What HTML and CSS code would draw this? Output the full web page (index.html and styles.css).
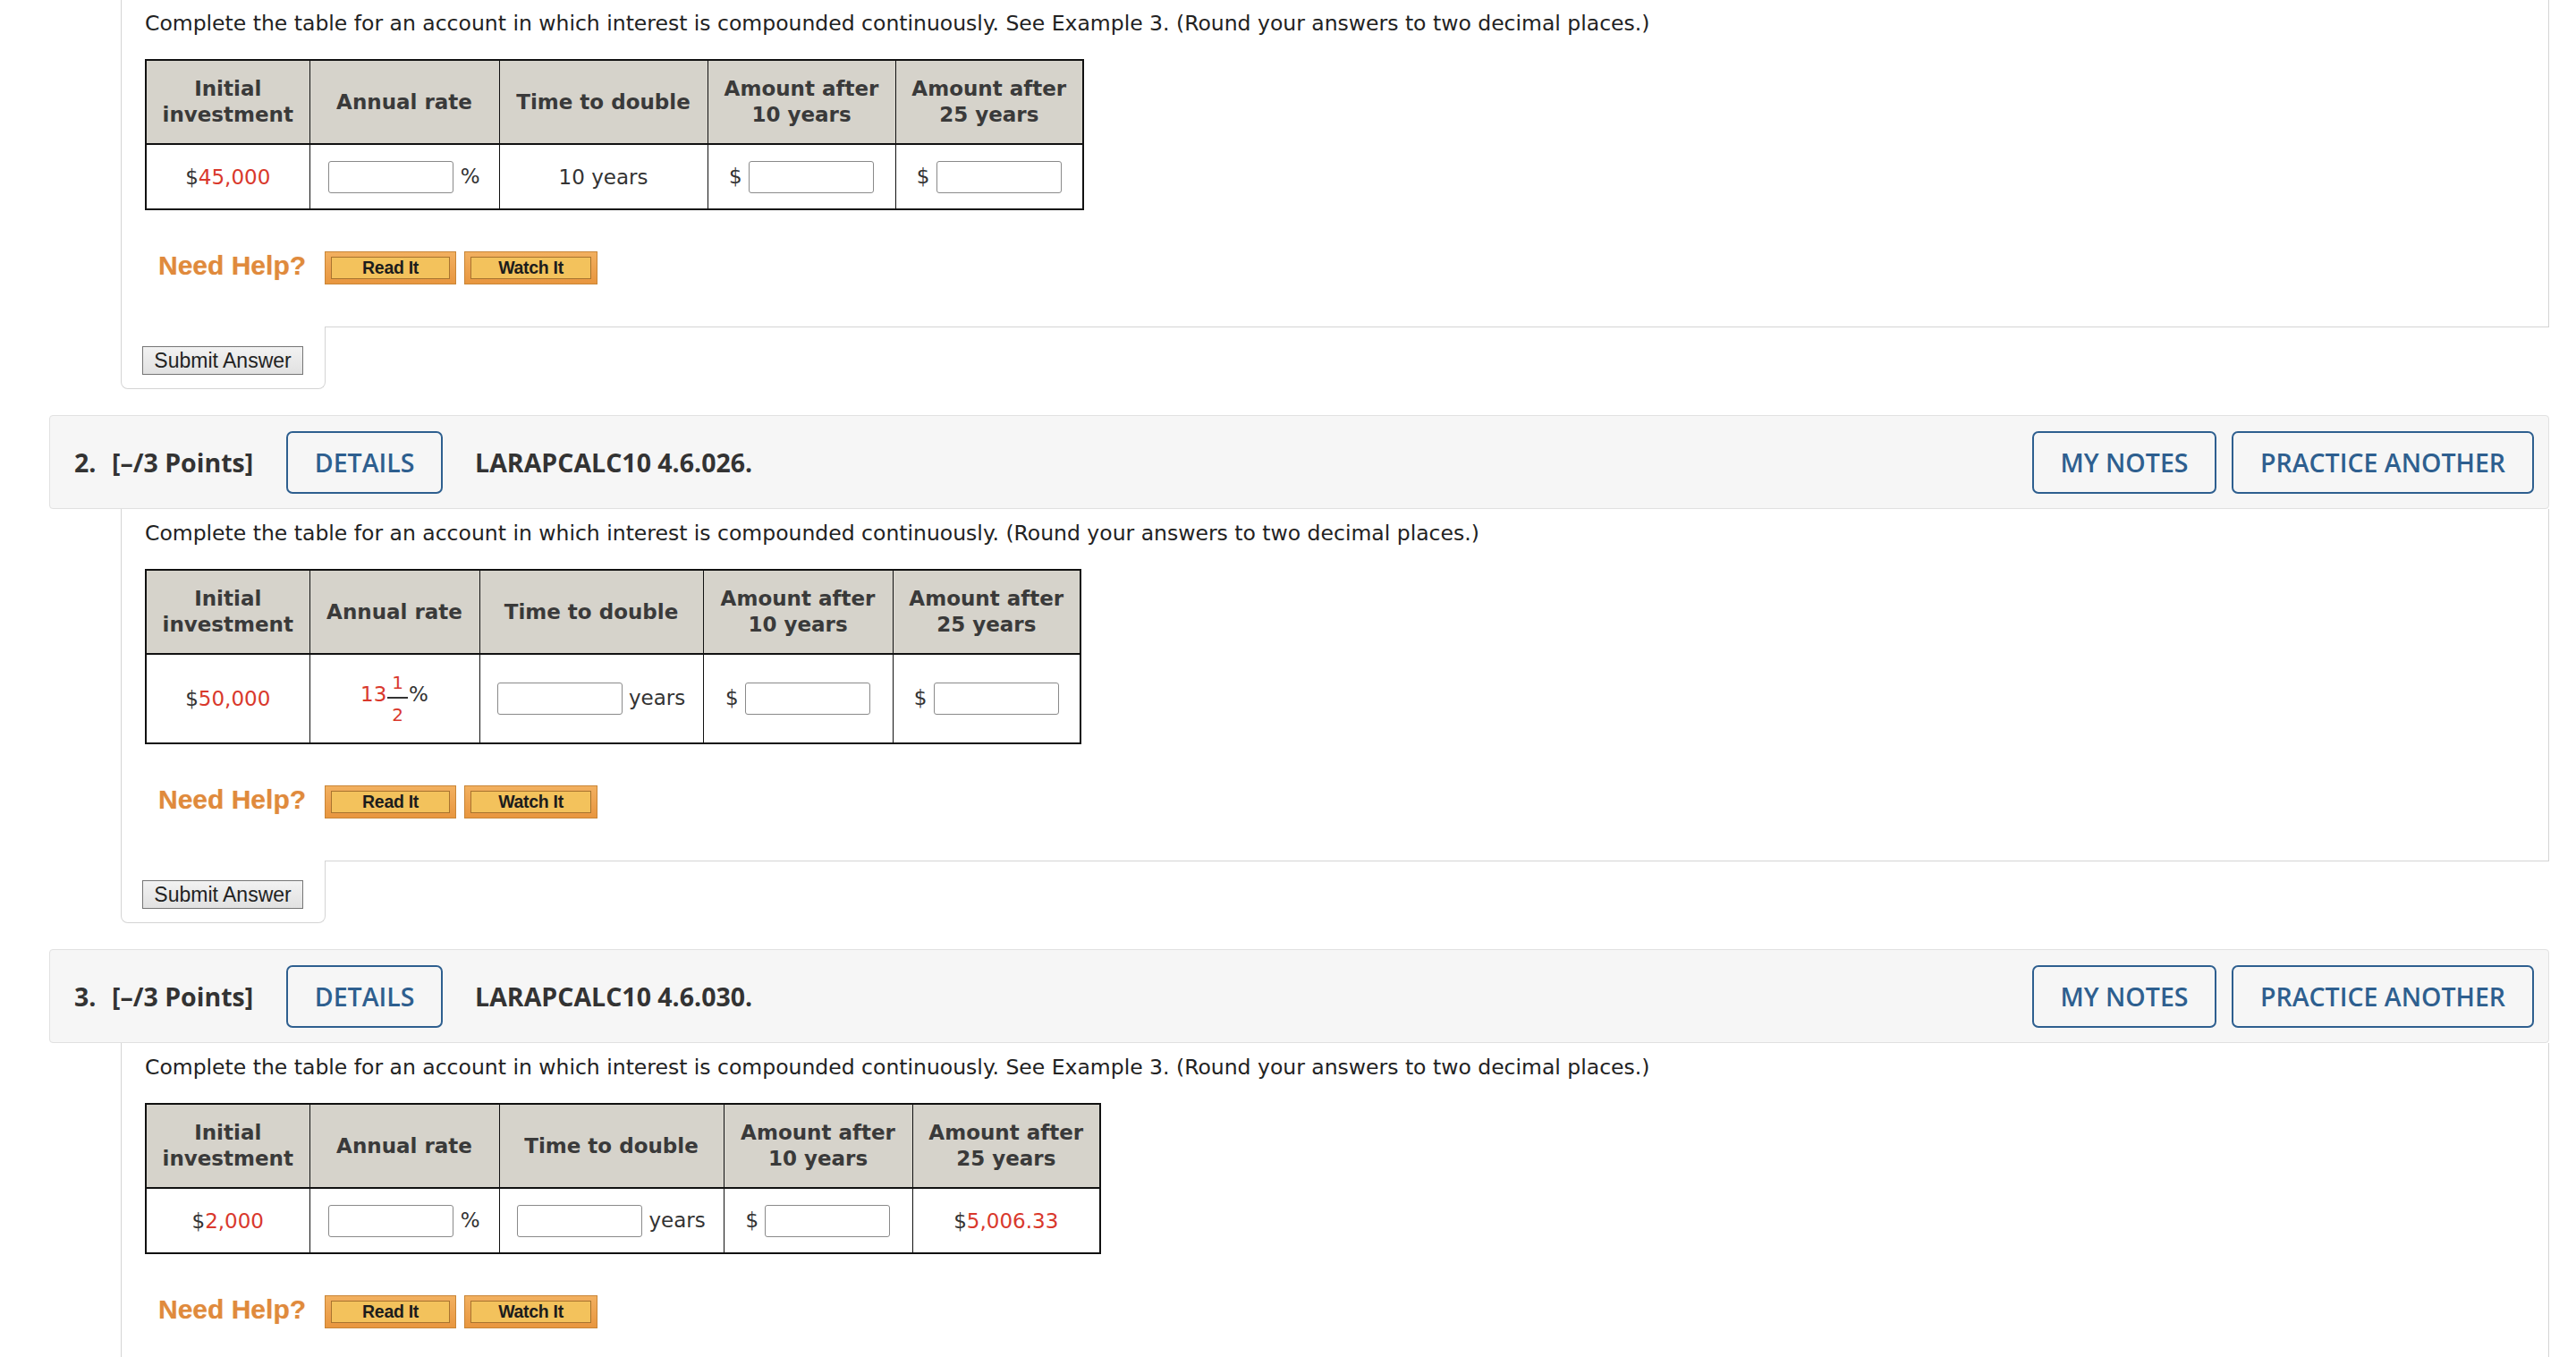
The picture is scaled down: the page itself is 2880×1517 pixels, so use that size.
FILE: index.html
```html
<!DOCTYPE html>
<html lang="en">
<head>
<meta charset="utf-8">
<title>Questions</title>
<link rel="stylesheet" href="styles.css">
</head>
<body>
<div class="page">

  <section class="question">
    <div class="qbody first">
      <p class="prompt">Complete the table for an account in which interest is compounded continuously. See Example 3. (Round your answers to two decimal places.)</p>
      <table class="grid t1">
        <colgroup><col class="c183"><col class="c212"><col class="c233"><col class="c210"><col class="c210"></colgroup>
        <tr class="hrow"><th>Initial<br>investment</th><th>Annual rate</th><th>Time to double</th><th>Amount after<br>10 years</th><th>Amount after<br>25 years</th></tr>
        <tr class="drow"><td>$<span class="red">45,000</span></td><td><input class="ans" type="text"> %</td><td>10 years</td><td>$ <input class="ans" type="text"></td><td>$ <input class="ans" type="text"></td></tr>
      </table>
      <div class="help"><span class="need">Need Help?</span><span class="hbtn read"><span>Read It</span></span><span class="hbtn watch"><span>Watch It</span></span></div>
    </div>
    <div class="qfoot"><div class="tab"><button class="submit" type="button">Submit Answer</button></div><div class="fill"></div></div>
  </section>

  <section class="question">
    <div class="qhead">
      <span class="qnum">2.</span><span class="qpts">[–/3 Points]</span>
      <span class="obtn details">DETAILS</span>
      <span class="qid">LARAPCALC10 4.6.026.</span>
      <span class="obtn notes">MY NOTES</span>
      <span class="obtn practice">PRACTICE ANOTHER</span>
    </div>
    <div class="qbody">
      <p class="prompt">Complete the table for an account in which interest is compounded continuously. (Round your answers to two decimal places.)</p>
      <table class="grid t2">
        <colgroup><col class="c183"><col class="c190"><col class="c250"><col class="c212"><col class="c210"></colgroup>
        <tr class="hrow"><th>Initial<br>investment</th><th>Annual rate</th><th>Time to double</th><th>Amount after<br>10 years</th><th>Amount after<br>25 years</th></tr>
        <tr class="drow tall"><td>$<span class="red">50,000</span></td><td><span class="red">13</span><span class="frac"><span class="num">1</span><span class="den">2</span></span>%</td><td><input class="ans" type="text"> years</td><td>$ <input class="ans" type="text"></td><td>$ <input class="ans" type="text"></td></tr>
      </table>
      <div class="help"><span class="need">Need Help?</span><span class="hbtn read"><span>Read It</span></span><span class="hbtn watch"><span>Watch It</span></span></div>
    </div>
    <div class="qfoot"><div class="tab"><button class="submit" type="button">Submit Answer</button></div><div class="fill"></div></div>
  </section>

  <section class="question">
    <div class="qhead">
      <span class="qnum">3.</span><span class="qpts">[–/3 Points]</span>
      <span class="obtn details">DETAILS</span>
      <span class="qid">LARAPCALC10 4.6.030.</span>
      <span class="obtn notes">MY NOTES</span>
      <span class="obtn practice">PRACTICE ANOTHER</span>
    </div>
    <div class="qbody">
      <p class="prompt">Complete the table for an account in which interest is compounded continuously. See Example 3. (Round your answers to two decimal places.)</p>
      <table class="grid t3">
        <colgroup><col class="c183"><col class="c212"><col class="c251"><col class="c211"><col class="c210"></colgroup>
        <tr class="hrow"><th>Initial<br>investment</th><th>Annual rate</th><th>Time to double</th><th>Amount after<br>10 years</th><th>Amount after<br>25 years</th></tr>
        <tr class="drow"><td>$<span class="red">2,000</span></td><td><input class="ans" type="text"> %</td><td><input class="ans" type="text"> years</td><td>$ <input class="ans" type="text"></td><td>$<span class="red">5,006.33</span></td></tr>
      </table>
      <div class="help"><span class="need">Need Help?</span><span class="hbtn read"><span>Read It</span></span><span class="hbtn watch"><span>Watch It</span></span></div>
    </div>
    <div class="qfoot"><div class="tab"><button class="submit" type="button">Submit Answer</button></div><div class="fill"></div></div>
  </section>

</div>
</body>
</html>
```
FILE: styles.css
```css
* { box-sizing: border-box; }
html, body { margin: 0; padding: 0; background: #fff; }
body { font-family: "DejaVu Sans", Verdana, sans-serif; color: #222; }

.page { padding: 0 30px 0 55px; }
.question { margin-bottom: 29px; }

/* header panel */
.qhead {
  display: flex; align-items: center;
  height: 105px; padding: 0 16px 0 27px;
  background: #f6f6f6; border: 1px solid #e1e1e1; border-radius: 4px;
  font-family: "Open Sans", sans-serif; font-size: 28.5px; color: #333;
}
.qnum { font-weight: 700; width: 42px; }
.qpts { font-weight: 700; margin-right: 37px; }
.qid { font-weight: 700; flex: 1; }
.obtn {
  display: flex; align-items: center; justify-content: center;
  height: 70px; border: 2px solid #2e5f8f; border-radius: 7px;
  color: #2e5f8f; font-weight: 600; font-size: 28.5px;
}
.details { width: 175px; margin-right: 36px; }
.notes { width: 206px; margin-right: 17px; }
.practice { width: 338px; }

/* body card */
.qbody {
  margin-left: 80px;
  border-left: 1px solid #d4d4d4; border-right: 1px solid #d4d4d4;
  padding: 12px 0 47px 26px;
}
.qbody.first { padding-top: 11px; }
.prompt { margin: 0 0 25px; font-size: 23.5px; line-height: 30px; color: #222; }

/* table */
.grid { border-collapse: collapse; table-layout: fixed; border: 2px solid #111; }
.t1 { width: 1048px; }
.t2 { width: 1045px; }
.t3 { width: 1067px; }
.c183 { width: 183px; } .c190 { width: 190px; } .c210 { width: 210px; }
.c211 { width: 211px; } .c212 { width: 212px; } .c233 { width: 233px; }
.c250 { width: 250px; } .c251 { width: 251px; }
.grid th, .grid td { border: 1px solid #111; text-align: center; vertical-align: middle; padding: 0 6px; white-space: nowrap; }
.grid th {
  background: #d6d3cb; color: #3a3a3a; font-weight: 700;
  font-size: 23px; line-height: 29px; border-bottom: 2px solid #111;
}
.hrow { height: 94px; }
.drow { height: 73px; }
.drow.tall { height: 100px; }
.grid td { font-size: 23px; color: #333; }
.red { color: #d9382c; }
.ans {
  width: 140px; height: 36px; margin: 0; padding: 0 6px;
  border: 1px solid #8a8a8a; border-radius: 3px; background: #fff;
  vertical-align: middle; font: 20px "DejaVu Sans", sans-serif;
}
.frac {
  display: inline-flex; flex-direction: column; align-items: center;
  vertical-align: 14px; font-size: 20px; line-height: 19px; color: #d9382c;
  margin: 0 1px;
}
.frac .num { padding: 0 5px 6px; border-bottom: 2px solid #333; }
.frac .den { padding-top: 9px; }

/* need help */
.help { display: flex; align-items: center; height: 37px; margin-top: 46px; padding-left: 15px; }
.need {
  font-family: "Liberation Sans", Arial, sans-serif; font-weight: 700;
  font-size: 30px; line-height: 34px; color: #e08a3c; margin: 0 21px 5px 0;
  text-shadow: 0 0 1px rgba(224,138,60,0.5);
}
.hbtn {
  display: flex; height: 37px; padding: 5px 6px;
  background: linear-gradient(#f2b060, #e8963f);
  border: 1px solid #c98536; margin-right: 9px;
}
.hbtn span {
  flex: 1; display: flex; align-items: center; justify-content: center;
  background: #f3c25c; border: 1px solid #a8732f;
  font-family: "Liberation Sans", Arial, sans-serif; font-weight: 700;
  font-size: 19.5px; color: #1c1c1c; letter-spacing: -0.3px;
}
.read { width: 147px; }
.watch { width: 149px; }

/* footer tab */
.qfoot { display: flex; margin-left: 80px; }
.tab {
  width: 229px; padding: 22px 0 15px 23px;
  border: 1px solid #d4d4d4; border-top: none; border-radius: 0 0 8px 8px;
}
.fill { flex: 1; border-top: 1px solid #d4d4d4; }
.submit {
  display: block; width: 180px; height: 32px; padding: 0; margin: 0;
  border: 1px solid #767676; border-radius: 0;
  background: linear-gradient(#f2f2f2, #e1e1e1);
  font-family: "Liberation Sans", Arial, sans-serif; font-size: 23px; color: #222;
}
```
